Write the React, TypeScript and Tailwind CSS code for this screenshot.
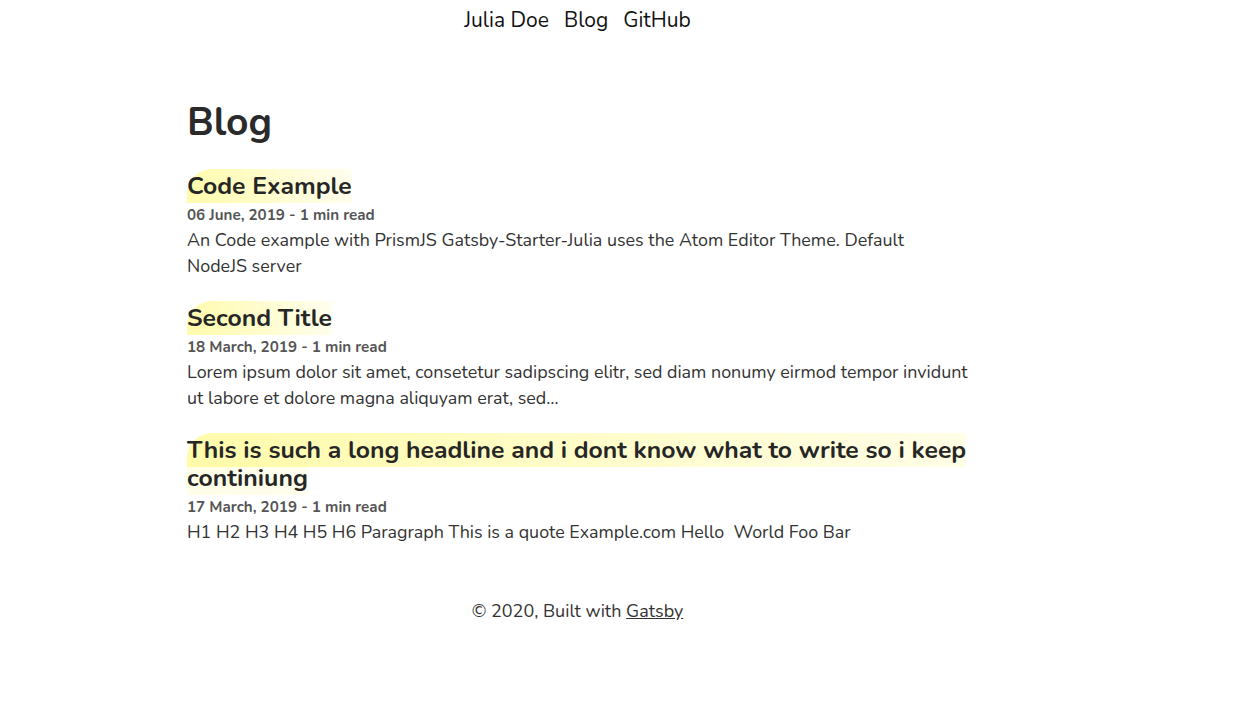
import React from "react";

const posts = [
  {
    title: "Code Example",
    date: "06 June, 2019 - 1 min read",
    excerpt:
      "An Code example with PrismJS Gatsby-Starter-Julia uses the Atom Editor Theme. Default NodeJS server",
  },
  {
    title: "Second Title",
    date: "18 March, 2019 - 1 min read",
    excerpt:
      "Lorem ipsum dolor sit amet, consetetur sadipscing elitr, sed diam nonumy eirmod tempor invidunt ut labore et dolore magna aliquyam erat, sed…",
  },
  {
    title:
      "This is such a long headline and i dont know what to write so i keep continiung",
    date: "17 March, 2019 - 1 min read",
    excerpt:
      "H1 H2 H3 H4 H5 H6 Paragraph This is a quote Example.com Hello \u00a0World Foo Bar",
  },
];

export default function App() {
  return (
    <div
      className="min-h-[707px] bg-white pl-[187px] text-[#333]"
      style={{ fontFamily: "Nunito, Lato, 'Noto Sans', sans-serif" }}
    >
      <div className="w-[781px]">
        <header className="flex justify-center gap-[15px] pt-[5px] text-[21px] leading-[30px] text-[#111]">
          <a>Julia Doe</a>
          <a>Blog</a>
          <a>GitHub</a>
        </header>
        <main className="pt-[64px]">
          <h1 className="text-[39px] font-bold leading-[48px] text-[#2a2a2a]">
            Blog
          </h1>
          <div className="mt-[25px] flex flex-col gap-[25px]">
            {posts.map((p) => (
              <article key={p.title}>
                <h3 className="text-[24.75px] font-bold leading-[28px] text-[#262626]">
                  <span className="rounded-tl-[1em] bg-[linear-gradient(-100deg,rgba(255,250,150,0.15),rgba(255,250,150,0.8)_100%,rgba(255,250,150,0.25))]">
                    {p.title}
                  </span>
                </h3>
                <div className="mt-[3px] text-[15.2px] font-bold leading-[24px] text-[#555]">
                  {p.date}
                </div>
                <p className="text-[17.9px] leading-[26px] text-[#333]">
                  {p.excerpt}
                </p>
              </article>
            ))}
          </div>
        </main>
        <footer className="mt-[53px] text-center text-[18px] leading-[26px] text-[#333]">
          © 2020, Built with <a className="underline">Gatsby</a>
        </footer>
      </div>
    </div>
  );
}
